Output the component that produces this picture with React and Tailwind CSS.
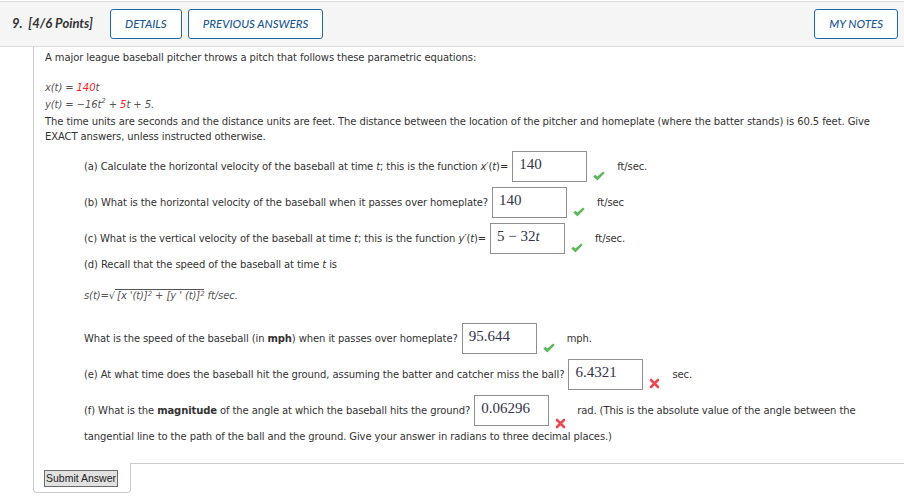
import React from "react";

function Check() {
  return (
    <svg width="12" height="10" viewBox="0 0 12 10" className="block">
      <path d="M0.3 5.6 L2.3 3.7 L4.4 5.6 L10 0.4 L11.7 2.1 L4.4 9.4 Z" fill="#5cb85c" />
    </svg>
  );
}

function Cross() {
  return (
    <svg width="11" height="11" viewBox="0 0 11 11" className="block">
      <path d="M2 2 L9 9 M9 2 L2 9" stroke="#ea4a52" strokeWidth="2.6" strokeLinecap="round" />
    </svg>
  );
}

function Box({ children }) {
  return (
    <span className="inline-flex h-[31px] w-[75px] shrink-0 items-start border border-[#8f8f8f] bg-white pl-[6px] pt-[3px] font-['Liberation_Serif',serif] text-[15px] leading-[18px] tracking-normal text-[#33334d]">
      {children}
    </span>
  );
}

function Row({ label, value, mark, unit }) {
  return (
    <div className="flex h-[31px] items-center">
      <span className="whitespace-nowrap">{label}</span>
      <span className="ml-[4px]">
        <Box>{value}</Box>
      </span>
      <span className="ml-[6px] self-end pb-[1px]">{mark === "ok" ? <Check /> : <Cross />}</span>
      <span className="ml-[12px] whitespace-nowrap">{unit}</span>
    </div>
  );
}

function HeaderBtn({ children }) {
  return (
    <span className="flex h-[30px] items-center rounded-[3px] border border-[#1f6aa5] bg-white px-[14px] font-['Lato',sans-serif] text-[11.5px] font-medium italic text-[#1a5a92]">
      {children}
    </span>
  );
}

export default function App() {
  return (
    <div className="w-[904px] h-[497px] overflow-hidden bg-white">
      <div className="pt-px">
        <div className="flex h-[46px] items-center border-y border-[#dcdcdc] bg-[#f5f5f5] pl-[12px] pr-[6px]">
          <span className="w-[98px] whitespace-pre font-['Lato',sans-serif] text-[13px] font-bold italic text-[#333]">
            9.  [4/6 Points]
          </span>
          <div className="flex gap-[6px]">
            <HeaderBtn>DETAILS</HeaderBtn>
            <HeaderBtn>PREVIOUS ANSWERS</HeaderBtn>
          </div>
          <div className="ml-auto">
            <HeaderBtn>MY NOTES</HeaderBtn>
          </div>
        </div>
      </div>

      <div className="ml-[33px] border-l border-[#cccccc] pl-[11px] pr-[20px] pt-[3px] pb-[19px] font-['DejaVu_Sans',sans-serif] text-[10px] leading-[15px] tracking-[-0.1px] text-[#333]">
        <p>A major league baseball pitcher throws a pitch that follows these parametric equations:</p>

        <div className="mt-[14px] italic text-[#555]">
          <div className="flex h-[17px] items-center">
            x(t) = <span className="ml-[3px] text-[#ff1a1a]">140</span>t
          </div>
          <div className="flex h-[17px] items-center">
            y(t) = −16t<sup className="text-[7px]">2</sup>&nbsp;+&nbsp;<span className="text-[#ff1a1a]">5</span>t + 5.
          </div>
        </div>
        <p className="mt-px">
          The time units are seconds and the distance units are feet. The distance between the location of the pitcher and homeplate (where the batter stands) is 60.5 feet. Give EXACT answers, unless instructed otherwise.
        </p>

        <div className="pl-[39px]">
          <div className="mt-[7px] flex flex-col gap-[5px]">
            <Row
              label={<>(a) Calculate the horizontal velocity of the baseball at time <i>t</i>; this is the function <i>x′</i>(<i>t</i>)=</>}
              value="140"
              mark="ok"
              unit="ft/sec."
            />
            <Row
              label="(b) What is the horizontal velocity of the baseball when it passes over homeplate?"
              value="140"
              mark="ok"
              unit="ft/sec"
            />
            <Row
              label={<>(c) What is the vertical velocity of the baseball at time <i>t</i>; this is the function <i>y′</i>(<i>t</i>)=</>}
              value={<>5 − 32<i>t</i></>}
              mark="ok"
              unit="ft/sec."
            />
          </div>

          <p className="mt-[3px]">
            (d) Recall that the speed of the baseball at time <i>t</i> is
          </p>
          <p className="mt-[16px] italic text-[#555]">
            s(t)=√<span className="border-t border-[#555] pl-[2px]">
              [x '(t)]<sup className="text-[7px]">2</sup> + [y ' (t)]<sup className="text-[7px]">2</sup>
            </span>{" "}
            ft/sec.
          </p>

          <div className="mt-[20px] flex flex-col gap-[5px]">
            <Row
              label={<>What is the speed of the baseball (in <b>mph</b>) when it passes over homeplate?</>}
              value="95.644"
              mark="ok"
              unit="mph."
            />
            <Row
              label="(e) At what time does the baseball hit the ground, assuming the batter and catcher miss the ball?"
              value="6.4321"
              mark="x"
              unit="sec."
            />
          </div>

          <p className="mt-[5px] leading-[15px]">
            (f) What is the <b>magnitude</b> of the angle at which the baseball hits the ground?
            <span className="ml-[4px] inline-block align-middle">
              <Box>0.06296</Box>
            </span>
            <span className="ml-[6px] mr-[11px] inline-block align-[-15px]">
              <Cross />
            </span>
            rad. (This is the absolute value of the angle between the tangential line to the path of the ball and the ground. Give your answer in radians to three decimal places.)
          </p>
        </div>
      </div>

      <div className="flex">
        <div className="ml-[33px] flex h-[30px] w-[98px] items-start rounded-b-[4px] border-x border-b border-[#cccccc] pl-[10px] pt-[7px]">
          <button className="h-[17px] border border-[#6b6b6b] bg-[#e1e1e1] px-px font-['Liberation_Sans',sans-serif] text-[10.5px] leading-[15px] text-[#222]">
            Submit Answer
          </button>
        </div>
        <div className="flex-1 border-t border-[#cccccc]" />
      </div>
    </div>
  );
}
